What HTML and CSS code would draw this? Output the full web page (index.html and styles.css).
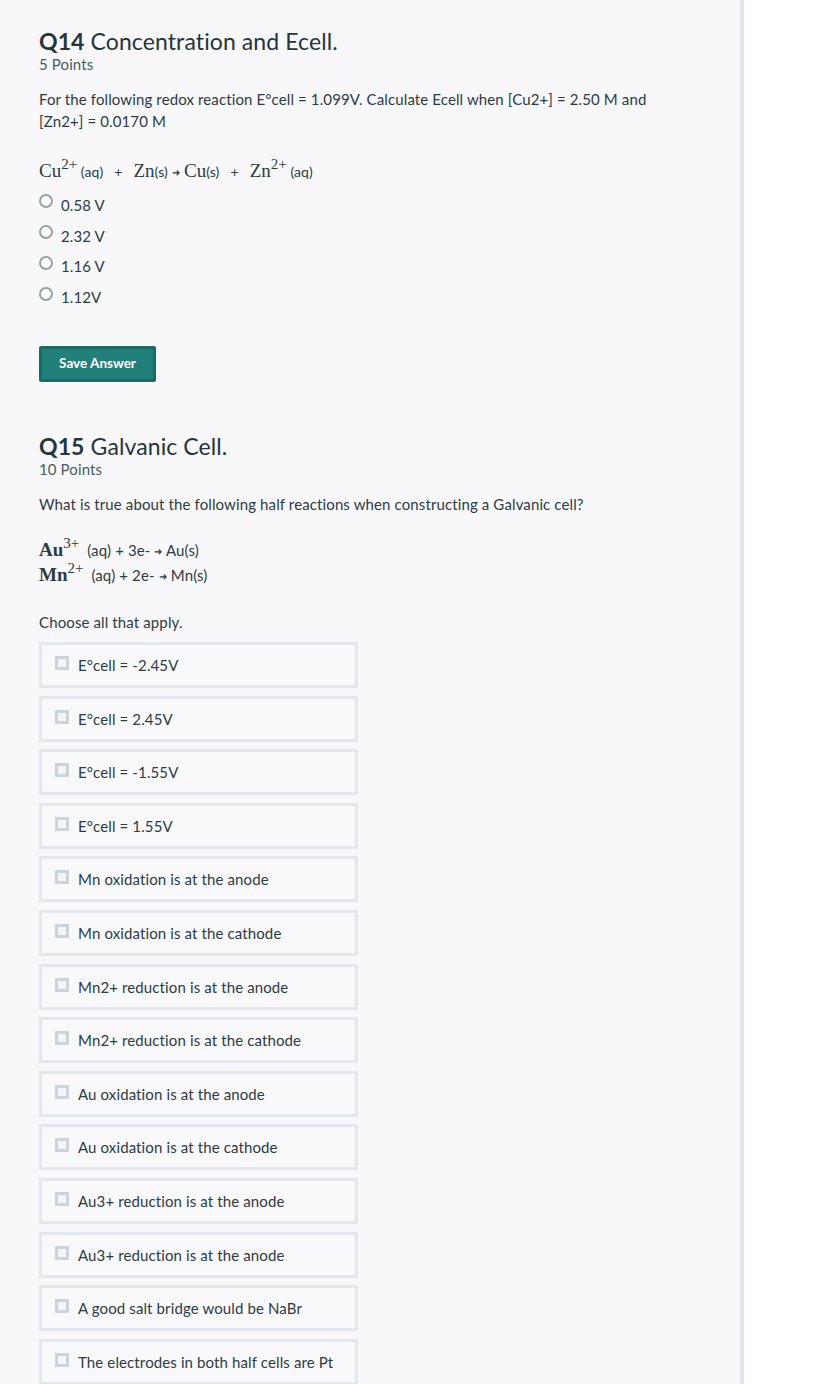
FILE: index.html
```html
<!DOCTYPE html>
<html>
<head>
<meta charset="utf-8">
<link rel="stylesheet" href="styles.css">
</head>
<body>
<div class="page">
  <main class="panel">
    <section class="question q14">
      <h2 class="qtitle"><b>Q14</b> Concentration and Ecell.</h2>
      <div class="points">5 Points</div>
      <p class="prompt">For the following redox reaction E°cell = 1.099V. Calculate Ecell when [Cu2+] = 2.50 M and [Zn2+] = 0.0170 M</p>
      <div class="eq eq1"><span class="sf">Cu<sup>2+</sup></span><span class="ss"> (aq)</span> <span class="op">+</span> <span class="sf">Zn</span><span class="ss">(s)</span> <span class="arrow">➜</span> <span class="sf">Cu</span><span class="ss">(s)</span> <span class="op">+</span> <span class="sf">Zn<sup>2+</sup></span><span class="ss"> (aq)</span></div>
      <ul class="radios">
        <li><span class="radio"></span><span class="lbl lo">0.58 V</span></li>
        <li><span class="radio"></span><span class="lbl lo">2.32 V</span></li>
        <li><span class="radio"></span><span class="lbl">1.16 V</span></li>
        <li><span class="radio"></span><span class="lbl">1.12V</span></li>
      </ul>
      <button class="save">Save Answer</button>
    </section>

    <section class="question q15">
      <h2 class="qtitle"><b>Q15</b> Galvanic Cell.</h2>
      <div class="points">10 Points</div>
      <p class="prompt">What is true about the following half reactions when constructing a Galvanic cell?</p>
      <div class="half">
        <div class="hr"><span class="sf2">Au<sup>3+</sup></span><span class="ss2"> (aq) + 3e- <span class="arrow">➜</span> Au(s)</span></div>
        <div class="hr"><span class="sf2">Mn<sup>2+</sup></span><span class="ss2"> (aq) + 2e- <span class="arrow">➜</span> Mn(s)</span></div>
      </div>
      <p class="choose">Choose all that apply.</p>
      <ul class="checks">
        <li class="opt"><span class="cb"></span><span>E°cell = -2.45V</span></li>
        <li class="opt"><span class="cb"></span><span>E°cell = 2.45V</span></li>
        <li class="opt"><span class="cb"></span><span>E°cell = -1.55V</span></li>
        <li class="opt"><span class="cb"></span><span>E°cell = 1.55V</span></li>
        <li class="opt"><span class="cb"></span><span>Mn oxidation is at the anode</span></li>
        <li class="opt"><span class="cb"></span><span>Mn oxidation is at the cathode</span></li>
        <li class="opt"><span class="cb"></span><span>Mn2+ reduction is at the anode</span></li>
        <li class="opt"><span class="cb"></span><span>Mn2+ reduction is at the cathode</span></li>
        <li class="opt"><span class="cb"></span><span>Au oxidation is at the anode</span></li>
        <li class="opt"><span class="cb"></span><span>Au oxidation is at the cathode</span></li>
        <li class="opt"><span class="cb"></span><span>Au3+ reduction is at the anode</span></li>
        <li class="opt"><span class="cb"></span><span>Au3+ reduction is at the anode</span></li>
        <li class="opt"><span class="cb"></span><span>A good salt bridge would be NaBr</span></li>
        <li class="opt"><span class="cb"></span><span>The electrodes in both half cells are Pt</span></li>
      </ul>
    </section>
  </main>
  <div class="rightside"></div>
</div>
</body>
</html>
```
FILE: styles.css
```css
html, body {
  margin: 0;
  padding: 0;
  background: #ffffff;
}
body {
  font-family: Lato, "Open Sans", sans-serif;
  color: #2d3b45;
  font-size: 15px;
  letter-spacing: 0.12px;
}
.page {
  display: flex;
  height: 1384px;
  overflow: hidden;
}
.panel {
  width: 701px;
  background: #f8f8fa;
  border-right: 4px solid #e1e4ea;
  padding: 27px 0 0 39px;
  box-sizing: content-box;
}
.rightside {
  flex: 1;
  background: #fff;
}
.qtitle {
  margin: 0;
  font-size: 23px;
  font-weight: 400;
  line-height: 28px;
  color: #26343d;
  letter-spacing: 0.1px;
}
.qtitle b {
  font-weight: 700;
}
.points {
  font-size: 15px;
  color: #4b5a64;
  line-height: 18px;
  margin-top: 0;
}
.prompt {
  margin: 15px 0 0;
  line-height: 22px;
  width: 640px;
}
.eq1 {
  margin-top: 28px;
  line-height: 22px;
  height: 22px;
  white-space: nowrap;
}
.sf {
  font-family: "Liberation Serif", "DejaVu Serif", serif;
  font-size: 19px;
  letter-spacing: 0;
}
.sf sup, .sf2 sup {
  font-size: 15px;
  vertical-align: 0;
  position: relative;
  top: -8px;
}
.ss {
  font-size: 14px;
}
.op {
  font-size: 14px;
  margin: 0 7px;
}
.arrow {
  font-size: 10px;
  position: relative;
  top: -1px;
}
.radios {
  list-style: none;
  margin: 6px 0 0;
  padding: 0;
}
.radios li {
  display: flex;
  align-items: center;
  height: 31px;
}
.radio {
  width: 10px;
  height: 10px;
  border: 2px solid #9aa0a3;
  border-radius: 50%;
  margin-right: 8px;
  background: #fff;
  position: relative;
  top: -3px;
}
.lbl {
  font-size: 15px;
}
.lbl.lo {
  position: relative;
  top: 1px;
}
.save {
  margin-top: 34px;
  display: block;
  width: 117px;
  height: 36px;
  background: #21807a;
  border: 3px solid #1c6a63;
  border-radius: 2px;
  color: #fff;
  font-family: Lato, "Open Sans", sans-serif;
  font-weight: 700;
  font-size: 13.5px;
  padding: 0 0 3px;
}
.q15 {
  margin-top: 50px;
}
.half {
  margin-top: 22px;
}
.hr {
  line-height: 25px;
  height: 25px;
  white-space: nowrap;
}
.sf2 {
  font-family: "Liberation Serif", "DejaVu Serif", serif;
  font-size: 19px;
  font-weight: 700;
  letter-spacing: 0;
}
.sf2 sup {
  font-weight: 400;
}
.ss2 {
  font-size: 15px;
  margin-left: 4px;
}
.choose {
  margin: 24px 0 0;
  line-height: 22px;
}
.checks {
  list-style: none;
  margin: 9px 0 0;
  padding: 0;
  display: flex;
  flex-direction: column;
  gap: 7.6px;
}
.opt {
  width: 300px;
  height: 40px;
  border: 3px solid #e3e6ec;
  background: #f9f9fb;
  display: flex;
  align-items: center;
  padding-left: 13px;
  box-sizing: content-box;
  font-size: 15px;
}
.cb {
  width: 8px;
  height: 8px;
  border: 3px solid #cdd3da;
  background: #f4f5f7;
  margin-right: 9px;
  position: relative;
  top: -2px;
}
```
